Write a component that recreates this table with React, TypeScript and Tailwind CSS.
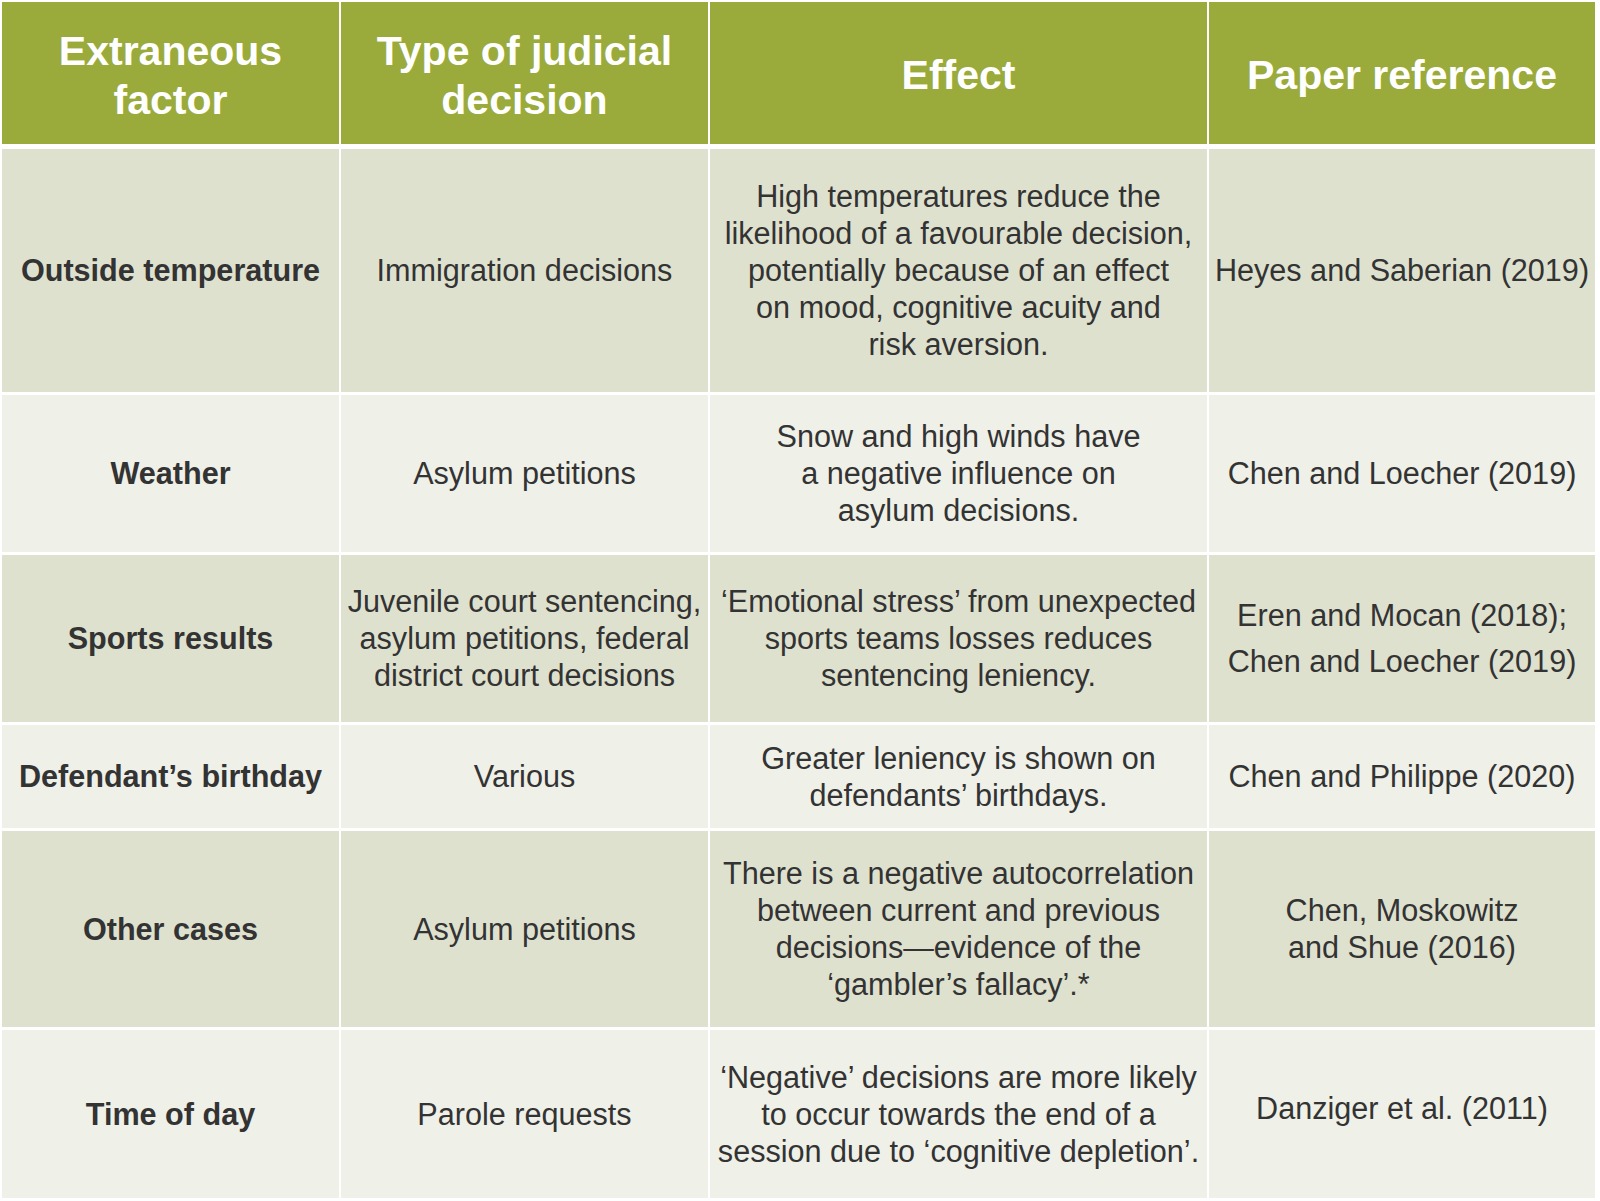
import React from 'react';

type Row = {
  factor: string;
  decision: string[];
  effect: string[];
  refs: string[][];
  refClass?: string;
  bg: string;
};

const rows: Row[] = [
  {
    factor: 'Outside temperature',
    decision: ['Immigration decisions'],
    effect: [
      'High temperatures reduce the',
      'likelihood of a favourable decision,',
      'potentially because of an effect',
      'on mood, cognitive acuity and',
      'risk aversion.',
    ],
    refs: [['Heyes and Saberian (2019)']],
    bg: 'bg-[#dfe1cf]',
  },
  {
    factor: 'Weather',
    decision: ['Asylum petitions'],
    effect: ['Snow and high winds have', 'a negative influence on', 'asylum decisions.'],
    refs: [['Chen and Loecher (2019)']],
    bg: 'bg-[#eff0e8]',
  },
  {
    factor: 'Sports results',
    decision: ['Juvenile court sentencing,', 'asylum petitions, federal', 'district court decisions'],
    effect: ['‘Emotional stress’ from unexpected', 'sports teams losses reduces', 'sentencing leniency.'],
    refs: [['Eren and Mocan (2018);'], ['Chen and Loecher (2019)']],
    bg: 'bg-[#dfe1cf]',
  },
  {
    factor: 'Defendant’s birthday',
    decision: ['Various'],
    effect: ['Greater leniency is shown on', 'defendants’ birthdays.'],
    refs: [['Chen and Philippe (2020)']],
    bg: 'bg-[#eff0e8]',
  },
  {
    factor: 'Other cases',
    decision: ['Asylum petitions'],
    effect: [
      'There is a negative autocorrelation',
      'between current and previous',
      'decisions—evidence of the',
      '‘gambler’s fallacy’.*',
    ],
    refs: [['Chen, Moskowitz', 'and Shue (2016)']],
    bg: 'bg-[#dfe1cf]',
  },
  {
    factor: 'Time of day',
    decision: ['Parole requests'],
    effect: [
      '‘Negative’ decisions are more likely',
      'to occur towards the end of a',
      'session due to ‘cognitive depletion’.',
    ],
    refs: [['Danziger et al. (2011)']],
    refClass: 'pb-[12px]',
    bg: 'bg-[#eff0e8]',
  },
];

const headers = [['Extraneous', 'factor'], ['Type of judicial', 'decision'], ['Effect'], ['Paper reference']];

function Lines({ lines }: { lines: string[] }) {
  return (
    <div className="flex flex-col items-center">
      {lines.map((l, i) => (
        <span key={i} className="whitespace-nowrap">
          {l}
        </span>
      ))}
    </div>
  );
}

export default function App() {
  return (
    <div className="min-h-screen bg-white pl-[2px] pt-[2px] font-['Liberation_Sans',Arial,sans-serif] text-[#333333]">
      <div className="grid grid-cols-[337px_367px_497px_386px] gap-x-[2px] h-[142px]">
        {headers.map((h, i) => (
          <div
            key={i}
            className="bg-[#9bab3b] flex items-center justify-center pt-[5px] text-white font-bold text-[41px] leading-[49px] text-center"
          >
            <Lines lines={h} />
          </div>
        ))}
      </div>
      <div className="mt-[5px] grid grid-cols-[337px_367px_497px_386px] grid-rows-[243px_157px_167px_103px_196px_168px] gap-x-[2px] gap-y-[3px] text-[30.6px] leading-[37px]">
        {rows.map((r, i) => (
          <React.Fragment key={i}>
            <div className={`${r.bg} flex items-center justify-center font-bold`}>
              <Lines lines={[r.factor]} />
            </div>
            <div className={`${r.bg} flex items-center justify-center`}>
              <Lines lines={r.decision} />
            </div>
            <div className={`${r.bg} flex items-center justify-center`}>
              <Lines lines={r.effect} />
            </div>
            <div className={`${r.bg} flex flex-col items-center justify-center gap-[9px] ${r.refClass ?? ''}`}>
              {r.refs.map((p, j) => (
                <Lines key={j} lines={p} />
              ))}
            </div>
          </React.Fragment>
        ))}
      </div>
    </div>
  );
}
